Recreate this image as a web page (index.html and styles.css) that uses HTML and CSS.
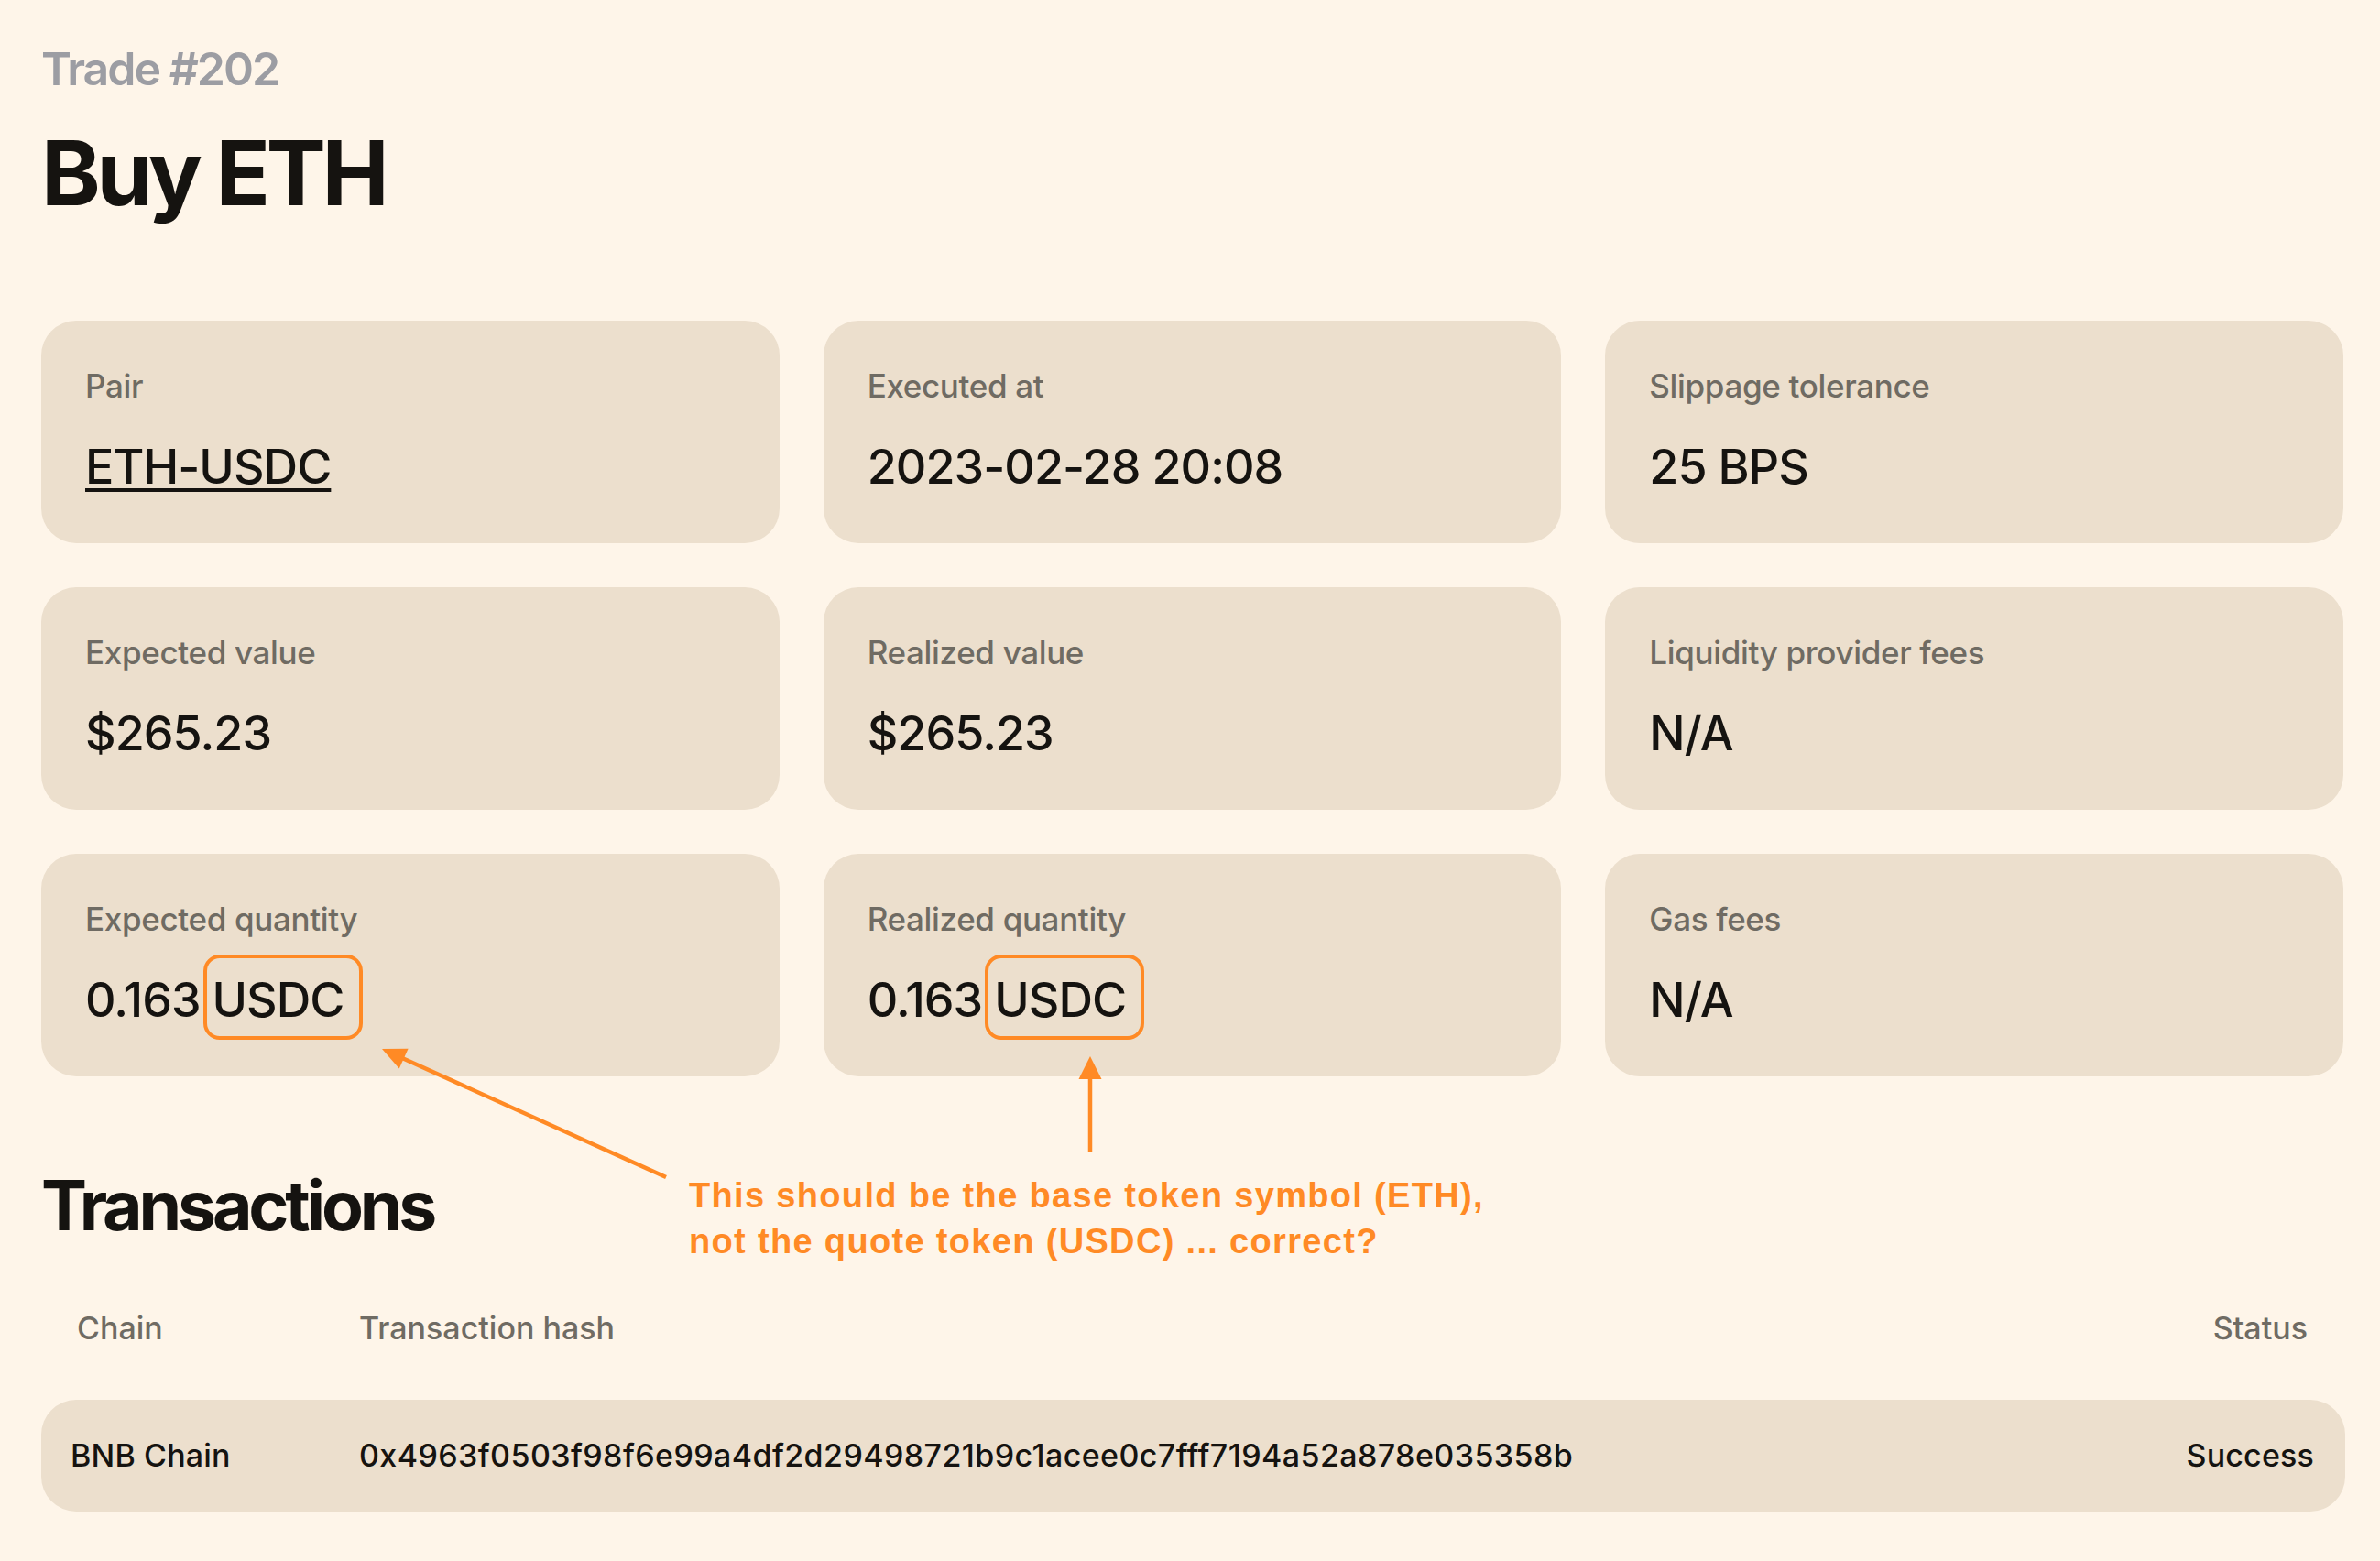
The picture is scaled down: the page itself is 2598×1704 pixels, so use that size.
FILE: index.html
```html
<!DOCTYPE html>
<html lang="en">
<head>
<meta charset="utf-8">
<title>Trade #202</title>
<link rel="stylesheet" href="styles.css">
</head>
<body>
<main class="page">
  <header class="page-head">
    <div class="eyebrow">Trade #202</div>
    <h1 class="title">Buy ETH</h1>
  </header>

  <section class="stats">
    <div class="card">
      <div class="label">Pair</div>
      <div class="value"><a class="link" href="#">ETH-USDC</a></div>
    </div>
    <div class="card">
      <div class="label">Executed at</div>
      <div class="value">2023-02-28 20:08</div>
    </div>
    <div class="card">
      <div class="label">Slippage tolerance</div>
      <div class="value">25 BPS</div>
    </div>
    <div class="card">
      <div class="label">Expected value</div>
      <div class="value">$265.23</div>
    </div>
    <div class="card">
      <div class="label">Realized value</div>
      <div class="value">$265.23</div>
    </div>
    <div class="card">
      <div class="label">Liquidity provider fees</div>
      <div class="value">N/A</div>
    </div>
    <div class="card">
      <div class="label">Expected quantity</div>
      <div class="value">0.163 <span class="flag">USDC</span></div>
    </div>
    <div class="card">
      <div class="label">Realized quantity</div>
      <div class="value">0.163 <span class="flag">USDC</span></div>
    </div>
    <div class="card">
      <div class="label">Gas fees</div>
      <div class="value">N/A</div>
    </div>
  </section>

  <h2 class="section-title">Transactions</h2>

  <section class="tx">
    <div class="tx-head">
      <div class="th">Chain</div>
      <div class="th">Transaction hash</div>
      <div class="th th-right">Status</div>
    </div>
    <div class="tx-row">
      <div class="td">BNB Chain</div>
      <div class="td hash">0x4963f0503f98f6e99a4df2d29498721b9c1acee0c7fff7194a52a878e035358b</div>
      <div class="td td-right">Success</div>
    </div>
  </section>

  <p class="note">This should be the base token symbol (ETH),<br>not the quote token (USDC) ... correct?</p>

  <svg class="arrows" width="2598" height="1704" viewBox="0 0 2598 1704" aria-hidden="true">
    <line x1="727" y1="1285" x2="438" y2="1154.5" stroke="#ff8a25" stroke-width="4.5"/>
    <polygon points="417,1145 445.6,1144.8 435.8,1166.6" fill="#ff8a25"/>
    <line x1="1190" y1="1257" x2="1190" y2="1175" stroke="#ff8a25" stroke-width="4.5"/>
    <polygon points="1190,1153 1202.5,1178 1177.5,1178" fill="#ff8a25"/>
  </svg>
</main>
</body>
</html>
```

FILE: styles.css
```css
* { box-sizing: border-box; }

html, body {
  margin: 0;
  padding: 0;
  background: #fef5e9;
}

body {
  font-family: Inter, "Noto Sans", "Liberation Sans", sans-serif;
  color: #151310;
}

.page {
  position: relative;
  width: 2598px;
  min-height: 1704px;
  padding: 45px 40px 0 45px;
}

.page-head {
  display: flex;
  flex-direction: column;
  gap: 30px;
}

.eyebrow {
  font-size: 50px;
  line-height: 60px;
  font-weight: 600;
  color: #9c9da3;
  letter-spacing: -0.04em;
}

.title {
  margin: 0;
  font-size: 98px;
  line-height: 108px;
  font-weight: 700;
  letter-spacing: -0.045em;
  color: #151310;
}

.stats {
  margin-top: 107px;
  display: grid;
  grid-template-columns: repeat(3, 1fr);
  gap: 48px;
  width: 2513px;
}

.card {
  background: #ecdfcd;
  border-radius: 38px;
  height: 243px;
  padding: 51px 48px 0 48px;
  display: flex;
  flex-direction: column;
  gap: 39px;
}

.label {
  font-size: 35px;
  line-height: 40px;
  font-weight: 500;
  color: #6f6b63;
  letter-spacing: -0.01em;
}

.value {
  font-size: 52px;
  line-height: 60px;
  font-weight: 500;
  color: #151310;
  letter-spacing: -0.018em;
  white-space: nowrap;
}

.link {
  color: inherit;
  text-decoration: underline;
  text-decoration-thickness: 4px;
  text-underline-offset: 5px;
}

.flag {
  position: relative;
}

.flag::after {
  content: "";
  position: absolute;
  left: -10px;
  right: -20px;
  top: -18px;
  bottom: -12px;
  border: 4px solid #ff8a25;
  border-radius: 18px;
}

.section-title {
  margin: 99px 0 0 0;
  font-size: 75px;
  line-height: 84px;
  font-weight: 700;
  letter-spacing: -0.055em;
}

.tx {
  margin-top: 72px;
  width: 2515px;
  display: flex;
  flex-direction: column;
  gap: 58px;
}

.tx-head,
.tx-row {
  display: grid;
  grid-template-columns: 347px 1fr auto;
  align-items: center;
}

.tx-head {
  padding: 0 41px 0 39px;
}

.tx-head .th:nth-child(2) {
  margin-left: -39px;
}

.th {
  font-size: 34px;
  line-height: 40px;
  font-weight: 500;
  color: #6f6b63;
  letter-spacing: 0;
}

.th-right,
.td-right {
  text-align: right;
}

.tx-row {
  background: #ecdfcd;
  border-radius: 38px;
  height: 122px;
  padding: 0 34px 0 32px;
}

.tx-row .td:nth-child(2) {
  margin-left: -32px;
}

.td {
  font-size: 34px;
  line-height: 40px;
  font-weight: 500;
  color: #151310;
  letter-spacing: 0.005em;
}

.hash {
  letter-spacing: 0.012em;
}

.note {
  position: absolute;
  left: 752px;
  top: 1280px;
  margin: 0;
  font-family: "Liberation Sans", Arial, sans-serif;
  font-size: 38px;
  line-height: 50px;
  font-weight: 700;
  color: #ff8a25;
  letter-spacing: 0.035em;
}

.arrows {
  position: absolute;
  left: 0;
  top: 0;
  pointer-events: none;
}
```
